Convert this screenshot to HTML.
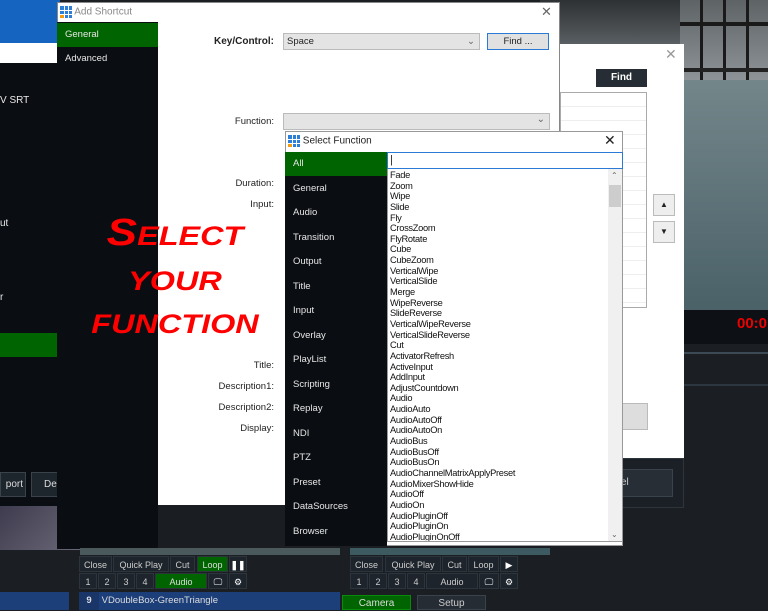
<!DOCTYPE html>
<html><head><meta charset="utf-8"><style>
*{margin:0;padding:0;box-sizing:border-box}
body{width:768px;height:610px;overflow:hidden;position:relative;background:#1b1f24;font-family:"Liberation Sans",sans-serif;font-size:10px;color:#222}
.a{position:absolute}
.dk{background:#0a0d12}
.w{color:#e8e8e8}
.lbl{position:absolute;right:0;width:120px;text-align:right;font-size:9.5px;color:#222}
.nav{position:absolute;left:0;width:100%;height:24px;line-height:24px;padding-left:8px;color:#e6e6e6;font-size:9.5px}
.it{height:10.65px;line-height:10.65px;font-size:9.3px;letter-spacing:-0.3px;color:#111;padding-left:2px;white-space:nowrap}
.bt{position:absolute;height:16px;line-height:16px;text-align:center;color:#ccc;font-size:9px;background:#1d242b;border:1px solid #2c343c}
.ic{display:inline-block;width:12px;height:12px;vertical-align:middle;background:
linear-gradient(#fff 0 0) 4px 0/1px 12px no-repeat,linear-gradient(#fff 0 0) 8px 0/1px 12px no-repeat,
linear-gradient(#fff 0 0) 0 4px/12px 1px no-repeat,linear-gradient(#fff 0 0) 0 8px/12px 1px no-repeat,
linear-gradient(#f39c12 0 0) 0 8px/4px 4px no-repeat,#2d7ed6}
.red{position:absolute;left:40px;width:270px;text-align:center;color:#f00;font-weight:bold;font-style:italic;font-variant:small-caps;font-size:38px;line-height:40px;transform:scaleX(1.2);white-space:nowrap}
</style></head><body>
<div class="a" style="left:0;top:0;width:60px;height:43px;background:#1565c0"></div>
<div class="a" style="left:0;top:43px;width:60px;height:20px;background:#fff"></div>
<div class="a dk" style="left:0;top:63px;width:60px;height:443px"></div>
<div class="a w" style="left:0;top:95px;font-size:10px">V SRT</div>
<div class="a w" style="left:0;top:218px;font-size:10px">ut</div>
<div class="a w" style="left:0;top:292px;font-size:10px">r</div>
<div class="a" style="left:0;top:333px;width:60px;height:24px;background:#006400"></div>
<div class="a" style="left:0;top:472px;width:26px;height:25px;background:#1d252d;border:1px solid #3a434c;color:#ddd;line-height:23px;font-size:10px;text-align:right;padding-right:2px">port</div>
<div class="a" style="left:31px;top:472px;width:30px;height:25px;background:#1d252d;border:1px solid #3a434c;color:#ddd;line-height:23px;font-size:10px;padding-left:12px">De</div>
<div class="a" style="left:0;top:506px;width:80px;height:44px;background:linear-gradient(135deg,#3d3b4d,#6a6878)"></div>
<div class="a" style="left:540px;top:0;width:228px;height:80px;background:linear-gradient(#2e3134,#7b8386)"></div>
<div class="a" style="left:540px;top:80px;width:228px;height:232px;background:linear-gradient(#73868a,#4a6168)"></div>
<div class="a" style="left:680px;top:0;width:88px;height:80px;background:linear-gradient(transparent 0 22px,#1a1a1a 22px 26px,transparent 26px 68px,#222 68px 72px,transparent 72px),repeating-linear-gradient(90deg,transparent 0 20px,#1a1a1a 20px 23px),linear-gradient(#5e6366,#8d9396)"></div>
<div class="a" style="left:680px;top:310px;width:88px;height:34px;background:#0d1014"></div>
<div class="a" style="left:737px;top:315px;color:#e00;font-size:15px;font-weight:bold">00:0</div>
<div class="a" style="left:680px;top:352px;width:88px;height:2px;background:#3b4a55"></div>
<div class="a" style="left:680px;top:384px;width:88px;height:2px;background:#2c3640"></div>
<div class="a" style="left:560px;top:44px;width:124px;height:414px;background:#fff"></div>
<div class="a" style="left:665px;top:46px;color:#999;font-size:14px">✕</div>
<div class="a" style="left:596px;top:69px;width:51px;height:18px;background:#262d35;color:#fff;font-size:10px;font-weight:bold;text-align:center;line-height:18px">Find</div>
<div class="a" style="left:560px;top:92px;width:87px;height:216px;border:1px solid #aaa;background:repeating-linear-gradient(#fff 0 13px,#eee 13px 14px)"></div>
<div class="a" style="left:560px;top:403px;width:88px;height:27px;background:#ddd;border:1px solid #bbb"></div>
<div class="a" style="left:653px;top:194px;width:22px;height:22px;background:#eee;border:1px solid #bbb;text-align:center;line-height:20px;font-size:8px">▲</div>
<div class="a" style="left:653px;top:221px;width:22px;height:22px;background:#eee;border:1px solid #bbb;text-align:center;line-height:20px;font-size:8px">▼</div>
<div class="a" style="left:560px;top:458px;width:124px;height:50px;background:#1b2027;border:1px solid #2d343b"></div>
<div class="a" style="left:560px;top:469px;width:113px;height:28px;background:#272e36;border:1px solid #3a434c;color:#ccc;font-size:10px;line-height:26px;padding-left:60px">el</div>
<div class="a" style="left:57px;top:2px;width:503px;height:547px;background:#fff;border:1px solid #888"></div>
<div class="a" style="left:60px;top:6px;color:#888;font-size:10px"><span class="ic"></span> Add Shortcut</div>
<div class="a" style="left:541px;top:4px;color:#666;font-size:13px">✕</div>
<div class="a dk" style="left:57px;top:22px;width:101px;height:527px"></div>
<div class="nav" style="left:57px;top:23px;width:101px;background:#006400">General</div>
<div class="nav" style="left:57px;top:47px;width:101px">Advanced</div>
<div class="a" style="left:158px;top:505px;width:402px;height:44px;background:#1a1e23"></div>
<div class="lbl" style="left:154px;top:36px;font-weight:bold;font-size:10px">Key/Control:</div>
<div class="a" style="left:283px;top:33px;width:197px;height:17px;background:#e4e4e4;border:1px solid #bbb;font-size:9.5px;line-height:15px;padding-left:3px">Space<span style="position:absolute;right:4px;color:#666">⌄</span></div>
<div class="a" style="left:487px;top:33px;width:62px;height:17px;background:#e1e1e1;border:1px solid #2b7bd6;font-size:9.5px;line-height:15px;text-align:center">Find ...</div>
<div class="lbl" style="left:154px;top:116px">Function:</div>
<div class="a" style="left:283px;top:113px;width:267px;height:17px;background:#e4e4e4;border:1px solid #bbb"><span style="position:absolute;right:4px;color:#666;top:0">⌄</span></div>
<div class="lbl" style="left:154px;top:178px">Duration:</div>
<div class="lbl" style="left:154px;top:199px">Input:</div>
<div class="lbl" style="left:154px;top:360px">Title:</div>
<div class="lbl" style="left:154px;top:381px">Description1:</div>
<div class="lbl" style="left:154px;top:402px">Description2:</div>
<div class="lbl" style="left:154px;top:423px">Display:</div>
<div class="red" style="top:213px">Select</div>
<div class="red" style="top:258px">your</div>
<div class="red" style="top:301px">function</div>
<div class="a" style="left:285px;top:131px;width:338px;height:415px;background:#fff;border:1px solid #999"></div>
<div class="a" style="left:288px;top:135px;color:#222;font-size:10px"><span class="ic"></span> Select Function</div>
<div class="a" style="left:604px;top:132px;color:#222;font-size:14px">✕</div>
<div class="a dk" style="left:285px;top:152px;width:102px;height:394px"></div>
<div class="a" style="left:285px;top:152px;width:102px">
<div class="nav" style="top:0;background:#006400">All</div>
<div class="nav" style="top:24.5px">General</div>
<div class="nav" style="top:49px">Audio</div>
<div class="nav" style="top:73.5px">Transition</div>
<div class="nav" style="top:98px">Output</div>
<div class="nav" style="top:122.5px">Title</div>
<div class="nav" style="top:147px">Input</div>
<div class="nav" style="top:171.5px">Overlay</div>
<div class="nav" style="top:196px">PlayList</div>
<div class="nav" style="top:220.5px">Scripting</div>
<div class="nav" style="top:245px">Replay</div>
<div class="nav" style="top:269.5px">NDI</div>
<div class="nav" style="top:294px">PTZ</div>
<div class="nav" style="top:318.5px">Preset</div>
<div class="nav" style="top:343px">DataSources</div>
<div class="nav" style="top:367.5px">Browser</div>
</div>
<div class="a" style="left:387px;top:152px;width:236px;height:17px;border:1px solid #2b7bd6;background:#fff;font-size:11px;padding-left:2px;line-height:14px">|</div>
<div class="a" style="left:387px;top:169px;width:236px;height:373px;border:1px solid #999;border-top:none;overflow:hidden;padding-top:1px">
<div class="a" style="right:0;top:0;width:14px;height:372px;background:#f0f0f0"><div style="position:absolute;top:16px;left:1px;width:12px;height:22px;background:#cdcdcd"></div><div style="position:absolute;top:2px;left:3px;font-size:8px;color:#666">⌃</div><div style="position:absolute;bottom:2px;left:3px;font-size:8px;color:#666">⌄</div></div>
<div class="it">Fade</div><div class="it">Zoom</div><div class="it">Wipe</div><div class="it">Slide</div><div class="it">Fly</div><div class="it">CrossZoom</div><div class="it">FlyRotate</div><div class="it">Cube</div><div class="it">CubeZoom</div><div class="it">VerticalWipe</div><div class="it">VerticalSlide</div><div class="it">Merge</div><div class="it">WipeReverse</div><div class="it">SlideReverse</div><div class="it">VerticalWipeReverse</div><div class="it">VerticalSlideReverse</div><div class="it">Cut</div><div class="it">ActivatorRefresh</div><div class="it">ActiveInput</div><div class="it">AddInput</div><div class="it">AdjustCountdown</div><div class="it">Audio</div><div class="it">AudioAuto</div><div class="it">AudioAutoOff</div><div class="it">AudioAutoOn</div><div class="it">AudioBus</div><div class="it">AudioBusOff</div><div class="it">AudioBusOn</div><div class="it">AudioChannelMatrixApplyPreset</div><div class="it">AudioMixerShowHide</div><div class="it">AudioOff</div><div class="it">AudioOn</div><div class="it">AudioPluginOff</div><div class="it">AudioPluginOn</div><div class="it">AudioPluginOnOff</div>
</div>
<div class="a" style="left:80px;top:548px;width:260px;height:7px;background:#4a5a5c"></div>
<div class="a" style="left:350px;top:548px;width:200px;height:7px;background:#3d5a60"></div>
<div class="bt" style="left:79px;top:556px;width:33px">Close</div>
<div class="bt" style="left:113px;top:556px;width:56px">Quick Play</div>
<div class="bt" style="left:170px;top:556px;width:25px">Cut</div>
<div class="bt" style="left:197px;top:556px;width:31px;background:#006400;color:#ddd">Loop</div>
<div class="bt" style="left:229px;top:556px;width:18px;color:#fff;font-weight:bold">❚❚</div>
<div class="bt" style="left:79px;top:573px;width:18px">1</div>
<div class="bt" style="left:98px;top:573px;width:18px">2</div>
<div class="bt" style="left:117px;top:573px;width:18px">3</div>
<div class="bt" style="left:136px;top:573px;width:18px">4</div>
<div class="bt" style="left:155px;top:573px;width:52px;background:#006400;color:#ddd">Audio</div>
<div class="bt" style="left:208px;top:573px;width:20px;color:#fff">🖵</div>
<div class="bt" style="left:229px;top:573px;width:18px;color:#fff">⚙</div>
<div class="bt" style="left:350px;top:556px;width:33px">Close</div>
<div class="bt" style="left:385px;top:556px;width:56px">Quick Play</div>
<div class="bt" style="left:442px;top:556px;width:25px">Cut</div>
<div class="bt" style="left:468px;top:556px;width:31px">Loop</div>
<div class="bt" style="left:500px;top:556px;width:18px;color:#fff">▶</div>
<div class="bt" style="left:350px;top:573px;width:18px">1</div>
<div class="bt" style="left:369px;top:573px;width:18px">2</div>
<div class="bt" style="left:388px;top:573px;width:18px">3</div>
<div class="bt" style="left:407px;top:573px;width:18px">4</div>
<div class="bt" style="left:426px;top:573px;width:52px">Audio</div>
<div class="bt" style="left:479px;top:573px;width:20px;color:#fff">🖵</div>
<div class="bt" style="left:500px;top:573px;width:18px;color:#fff">⚙</div>
<div class="a" style="left:0;top:592px;width:69px;height:18px;background:#1c3f7a"></div>
<div class="a" style="left:79px;top:592px;width:261px;height:18px;background:#1c3f7a;color:#ddd;font-size:9.5px;line-height:18px"><span style="display:inline-block;width:20px;text-align:center;font-weight:bold;background:#1a3568">9</span> VDoubleBox-GreenTriangle</div>
<div class="a" style="left:342px;top:595px;width:69px;height:15px;background:#006400;border:1px solid #0a8a0a;color:#ddd;font-size:10px;text-align:center;line-height:15px">Camera</div>
<div class="a" style="left:417px;top:595px;width:69px;height:15px;background:#252c34;border:1px solid #3a434c;color:#ccc;font-size:10px;text-align:center;line-height:15px">Setup</div>
</body></html>
